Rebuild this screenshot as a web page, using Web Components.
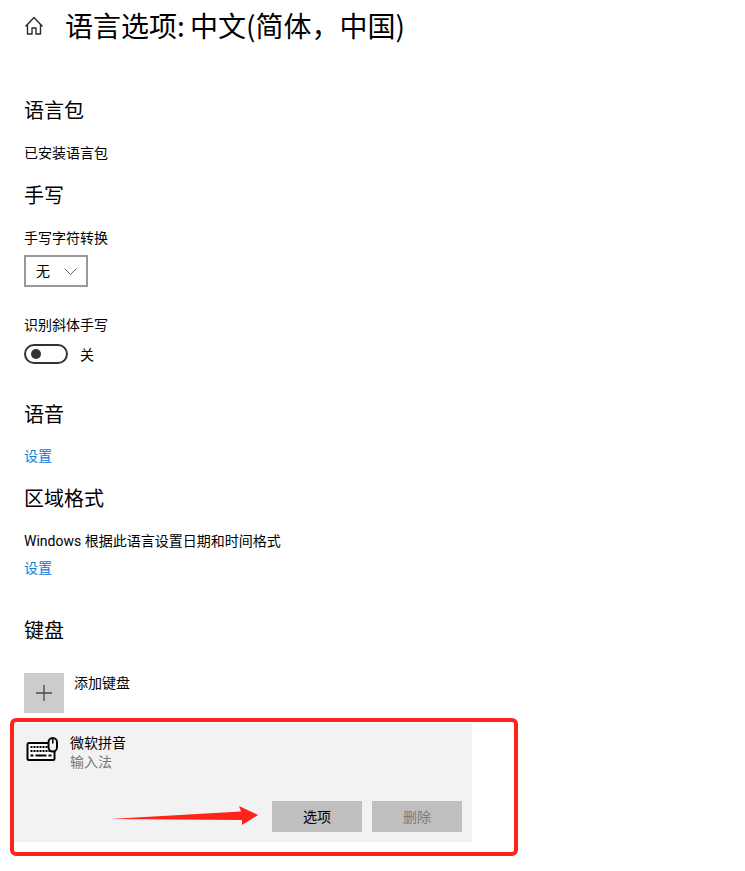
<!DOCTYPE html>
<html lang="zh-CN">
<head>
<meta charset="utf-8">
<title>语言选项</title>
<style>
    html, body { margin: 0; background: #fff; }
    body {
        width: 745px;
        height: 871px;
        overflow: hidden;
        font-family: Roboto, "Noto Sans CJK SC", sans-serif;
        color: #000;
    }
</style>
</head>
<body>
<settings-page>
    <page-header slot="header">语言选项: 中文(简体，中国)</page-header>

    <section-title style="--gap: 43px">语言包</section-title>
    <body-text style="--gap: 18px">已安装语言包</body-text>

    <section-title style="--gap: 19px">手写</section-title>
    <body-text style="--gap: 18px">手写字符转换</body-text>
    <combo-box style="--gap: 7px">无</combo-box>
    <body-text style="--gap: 28px">识别斜体手写</body-text>
    <toggle-switch style="--gap: 9px">关</toggle-switch>

    <section-title style="--gap: 37px">语音</section-title>
    <body-text link style="--gap: 17px">设置</body-text>

    <section-title style="--gap: 19px">区域格式</section-title>
    <body-text style="--gap: 18px">Windows 根据此语言设置日期和时间格式</body-text>
    <body-text link style="--gap: 7px">设置</body-text>

    <section-title style="--gap: 39px">键盘</section-title>
    <add-tile style="--gap: 28px">添加键盘</add-tile>
    <ime-card style="--gap: 10px">
        <span slot="name">微软拼音</span>
        <span slot="kind">输入法</span>
        <flat-button slot="actions">选项</flat-button>
        <flat-button slot="actions" disabled>删除</flat-button>
    </ime-card>
</settings-page>

<script>
class SettingsPage extends HTMLElement {
    connectedCallback() {
        this.attachShadow({ mode: 'open' });
        this.shadowRoot.innerHTML = `
            <style>
                :host { display: block; }
                main { display: flex; flex-direction: column; align-items: flex-start; padding: 0 24px; }
            </style>
            <slot name="header"></slot>
            <main><slot></slot></main>
        `;
    }
}

class PageHeader extends HTMLElement {
    connectedCallback() {
        this.attachShadow({ mode: 'open' });
        this.shadowRoot.innerHTML = `
            <style>
                :host { display: flex; align-items: flex-start; height: 54px; padding-left: 24px; }
                svg { width: 20px; height: 20px; margin: 16px 21px 0 0; flex: none; }
                h1 { margin: 0; font: 400 28px/50px "Noto Sans CJK SC", sans-serif; white-space: nowrap; word-spacing: -1px; }
            </style>
            <svg viewBox="0 0 20 20" fill="none" stroke="#2b2b2b" stroke-width="1.4" stroke-linejoin="round">
                <path d="M1.500 10.500 10 1.500l8.500 9"/>
                <path d="M3.500 8.500V18H8v-6h4v6h4.500V8.500"/>
            </svg>
            <h1><slot></slot></h1>
        `;
    }
}

class SectionTitle extends HTMLElement {
    connectedCallback() {
        this.attachShadow({ mode: 'open' });
        this.shadowRoot.innerHTML = `
            <style>
                :host { display: block; height: 28px; margin-top: var(--gap, 0); font-size: 20px; line-height: 29px; }
            </style>
            <slot></slot>
        `;
    }
}

class BodyText extends HTMLElement {
    connectedCallback() {
        this.attachShadow({ mode: 'open' });
        this.shadowRoot.innerHTML = `
            <style>
                :host { display: block; height: 20px; margin-top: var(--gap, 0); font-size: 14px; line-height: 20px; white-space: nowrap; }
                :host([link]) { color: #0a7fdc; }
            </style>
            <slot></slot>
        `;
    }
}

class ComboBox extends HTMLElement {
    connectedCallback() {
        this.attachShadow({ mode: 'open' });
        this.shadowRoot.innerHTML = `
            <style>
                :host {
                    display: flex; align-items: center; justify-content: space-between;
                    box-sizing: border-box; width: 64px; height: 32px; margin-top: var(--gap, 0);
                    padding: 0 9px 2px 10px; border: 2px solid #999; font-size: 14px;
                }
                svg { width: 13px; height: 7px; margin-top: 2px; }
            </style>
            <slot></slot>
            <svg viewBox="0 0 13 7" fill="none" stroke="#666" stroke-width="1"><path d="M.5.5l6 6 6-6"/></svg>
        `;
    }
}

class ToggleSwitch extends HTMLElement {
    connectedCallback() {
        this.attachShadow({ mode: 'open' });
        this.shadowRoot.innerHTML = `
            <style>
                :host { display: flex; align-items: center; gap: 12px; height: 20px; margin-top: var(--gap, 0); font-size: 14px; }
                .track {
                    box-sizing: border-box; width: 44px; height: 20px; padding: 4px 5px;
                    border: 2px solid #333; border-radius: 10px;
                }
                .thumb { width: 10px; height: 10px; margin-top: -1px; border-radius: 50%; background: #333; }
            </style>
            <div class="track"><div class="thumb"></div></div>
            <slot></slot>
        `;
    }
}

class AddTile extends HTMLElement {
    connectedCallback() {
        this.attachShadow({ mode: 'open' });
        this.shadowRoot.innerHTML = `
            <style>
                :host { display: flex; gap: 10px; margin-top: var(--gap, 0); font-size: 14px; line-height: 20px; }
                .tile { display: flex; align-items: center; justify-content: center; width: 40px; height: 40px; background: #ccc; }
                svg { width: 16px; height: 16px; }
            </style>
            <div class="tile">
                <svg viewBox="0 0 16 16" stroke="#484848" stroke-width="1.3"><path d="M8 0v16M0 8h16"/></svg>
            </div>
            <slot></slot>
        `;
    }
}

class ImeCard extends HTMLElement {
    connectedCallback() {
        this.attachShadow({ mode: 'open' });
        this.shadowRoot.innerHTML = `
            <style>
                :host {
                    display: flex; flex-direction: column; position: relative; box-sizing: border-box;
                    width: 458px; height: 119px; margin: var(--gap, 0) 0 0 -10px;
                    padding: 10px 10px 10px 12px; background: #f2f2f2; font-size: 14px;
                }
                .info { display: flex; gap: 12px; }
                .info svg { width: 32px; height: 26px; margin-top: 4px; flex: none; }
                .text { display: flex; flex-direction: column; margin-top: 1px; line-height: 19px; }
                .kind { color: #777; }
                .actions { display: flex; justify-content: flex-end; gap: 10px; margin-top: auto; }
                /* hand-drawn markup lying over the card */
                .mark { position: absolute; left: -5px; top: -6px; width: 510px; height: 141px; pointer-events: none; }
                .arrow { position: absolute; left: 96px; top: 82px; width: 148px; height: 20px; pointer-events: none; }
            </style>
            <div class="info">
                <svg viewBox="0 0 32 26" fill="none" stroke="#000">
                    <rect x="1.500" y="6" width="27" height="17" rx="1.500" fill="#fafafa" stroke-width="2"/>
                    <path d="M4.500 10h20M4.500 14h20" stroke-width="2" stroke-dasharray="2 1"/>
                    <path d="M4.500 18.500h3M9.500 18.500h11M22.500 18.500h3" stroke-width="2"/>
                    <rect x="22.500" y="1" width="8.500" height="13.500" rx="4.250" fill="#f2f2f2" stroke-width="2"/>
                    <path d="M26.750 2v4.500" stroke-width="1.500"/>
                </svg>
                <div class="text">
                    <slot name="name"></slot>
                    <span class="kind"><slot name="kind"></slot></span>
                </div>
            </div>
            <div class="actions"><slot name="actions"></slot></div>
            <svg class="mark" viewBox="0 0 510 141" fill="none">
                <rect x="3" y="3" width="504" height="134" rx="4" stroke="#ff2318" stroke-width="4"/>
            </svg>
            <svg class="arrow" viewBox="0 0 148 20">
                <path d="M0 14 131 6.500 129 1 148 10 132 20 132 15Z" fill="#ff2318"/>
            </svg>
        `;
    }
}

class FlatButton extends HTMLElement {
    connectedCallback() {
        this.attachShadow({ mode: 'open' });
        this.shadowRoot.innerHTML = `
            <style>
                :host {
                    display: flex; align-items: center; justify-content: center;
                    box-sizing: border-box; width: 90px; height: 31px; padding-bottom: 2px;
                    background: #bfbfbf; font-size: 14px;
                }
                :host([disabled]) { color: #7a7a7a; }
            </style>
            <slot></slot>
        `;
    }
}

customElements.define('settings-page', SettingsPage);
customElements.define('page-header', PageHeader);
customElements.define('section-title', SectionTitle);
customElements.define('body-text', BodyText);
customElements.define('combo-box', ComboBox);
customElements.define('toggle-switch', ToggleSwitch);
customElements.define('add-tile', AddTile);
customElements.define('ime-card', ImeCard);
customElements.define('flat-button', FlatButton);
</script>
</body>
</html>
